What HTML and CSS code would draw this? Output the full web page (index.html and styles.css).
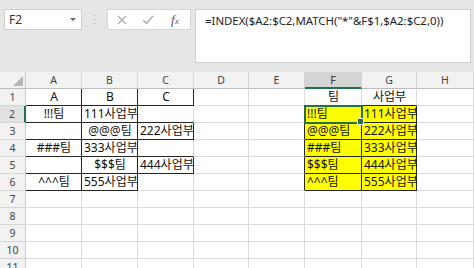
FILE: index.html
```html
<!DOCTYPE html>
<html lang="ko">
<head>
<meta charset="utf-8">
<link rel="stylesheet" href="styles.css">
</head>
<body>
<div class="app">
  <div class="fbar">
    <div class="namebox"><span class="nbtext">F2</span><span class="dd"></span></div>
    <div class="grip">
      <svg width="3" height="12" viewBox="0 0 3 12"><rect x="1" y="1" width="1" height="1" fill="#a9a9a9"/><rect x="1" y="5" width="1" height="1" fill="#a9a9a9"/><rect x="1" y="9" width="1" height="1" fill="#a9a9a9"/></svg>
    </div>
    <div class="fxbox">
      <svg class="ic-x" width="10" height="10" viewBox="0 0 10 10"><path d="M1 1 L9 9 M9 1 L1 9" stroke="#ababab" stroke-width="1.2" fill="none"/></svg>
      <svg class="ic-ok" width="12" height="10" viewBox="0 0 12 10"><path d="M1 5 L4.5 8.5 L11 1" stroke="#ababab" stroke-width="1.3" fill="none"/></svg>
      <span class="fx">f<span class="fxs">x</span></span>
    </div>
    <div class="finput">=INDEX($A2:$C2,MATCH("*"&amp;F$1,$A2:$C2,0))</div>
  </div>

  <div class="sheet">
    <div class="corner"><svg width="10" height="10" viewBox="0 0 10 10"><polygon points="10,0 10,10 0,10" fill="#b5b5b5"/></svg></div>
    <div class="ch">A</div><div class="ch">B</div><div class="ch">C</div><div class="ch">D</div><div class="ch">E</div><div class="ch ch-on">F</div><div class="ch">G</div><div class="ch">H</div>

    <div class="rh">1</div>
    <div class="c ctr dr db">A</div><div class="c ctr dr db">B</div><div class="c ctr dr db">C</div><div class="c"></div><div class="c"></div><div class="c ctr db">팀</div><div class="c ctr db">사업부</div><div class="c"></div>

    <div class="rh rh-on">2</div>
    <div class="c ctr dr db">!!!팀</div><div class="c dr db">111사업부</div><div class="c db"></div><div class="c"></div><div class="c dr"></div><div class="c y dr db sel">!!!팀</div><div class="c y dr db">111사업부</div><div class="c"></div>

    <div class="rh">3</div>
    <div class="c dr db"></div><div class="c ctr dr db">@@@팀</div><div class="c dr db">222사업부</div><div class="c"></div><div class="c dr"></div><div class="c y dr db">@@@팀</div><div class="c y dr db">222사업부</div><div class="c"></div>

    <div class="rh">4</div>
    <div class="c ctr dr db">###팀</div><div class="c dr db">333사업부</div><div class="c db"></div><div class="c"></div><div class="c dr"></div><div class="c y dr db">###팀</div><div class="c y dr db">333사업부</div><div class="c"></div>

    <div class="rh">5</div>
    <div class="c dr db"></div><div class="c ctr dr db">$$$팀</div><div class="c dr db">444사업부</div><div class="c"></div><div class="c dr"></div><div class="c y dr db">$$$팀</div><div class="c y dr db">444사업부</div><div class="c"></div>

    <div class="rh">6</div>
    <div class="c ctr dr db">^^^팀</div><div class="c dr db">555사업부</div><div class="c"></div><div class="c"></div><div class="c dr"></div><div class="c y dr db">^^^팀</div><div class="c y dr db">555사업부</div><div class="c"></div>

    <div class="rh">7</div>
    <div class="c"></div><div class="c"></div><div class="c"></div><div class="c"></div><div class="c"></div><div class="c"></div><div class="c"></div><div class="c"></div>
    <div class="rh">8</div>
    <div class="c"></div><div class="c"></div><div class="c"></div><div class="c"></div><div class="c"></div><div class="c"></div><div class="c"></div><div class="c"></div>
    <div class="rh">9</div>
    <div class="c"></div><div class="c"></div><div class="c"></div><div class="c"></div><div class="c"></div><div class="c"></div><div class="c"></div><div class="c"></div>
    <div class="rh">10</div>
    <div class="c"></div><div class="c"></div><div class="c"></div><div class="c"></div><div class="c"></div><div class="c"></div><div class="c"></div><div class="c"></div>
    <div class="rh">11</div>
    <div class="c"></div><div class="c"></div><div class="c"></div><div class="c"></div><div class="c"></div><div class="c"></div><div class="c"></div><div class="c"></div>
  </div>
</div>
</body>
</html>
```

FILE: styles.css
```css
* { box-sizing: border-box; }
html, body { margin: 0; padding: 0; }
body {
  width: 474px;
  height: 268px;
  overflow: hidden;
  background: #ffffff;
  font-family: "Noto Sans", "Noto Sans CJK KR", sans-serif;
}
.app { width: 474px; }

/* formula bar */
.fbar {
  height: 72px;
  background: #e6e6e6;
  display: flex;
  align-items: flex-start;
  padding-top: 9px;
}
.namebox {
  margin-left: 4px;
  width: 78px;
  height: 21px;
  background: #fff;
  border: 1px solid #cfcfcf;
  display: flex;
  align-items: center;
  justify-content: space-between;
  padding: 0 5px 0 4px;
}
.nbtext { font-size: 12px; color: #333; }
.dd {
  width: 0; height: 0;
  border-left: 3px solid transparent;
  border-right: 3px solid transparent;
  border-top: 3px solid #666;
}
.grip {
  width: 25px;
  height: 21px;
  display: flex;
  align-items: center;
  justify-content: center;
}
.fxbox {
  width: 84px;
  height: 21px;
  background: #fff;
  border: 1px solid #d6d6d6;
  display: flex;
  align-items: center;
  padding-left: 9px;
}
.ic-x { margin-right: 15px; }
.ic-ok { margin-right: 17px; }
.fx {
  font-family: "Liberation Serif", serif;
  font-style: italic;
  font-size: 13px;
  color: #555;
  line-height: 1;
}
.fxs { font-size: 9px; }
.finput {
  margin-left: 4px;
  width: 276px;
  height: 54px;
  background: #fff;
  border: 1px solid #cfcfcf;
  padding: 2px 0 0 9px;
  font-size: 11.4px;
  color: #222;
  white-space: nowrap;
  line-height: 17px;
}

/* sheet grid */
.sheet {
  display: grid;
  grid-template-columns: 26px 56px 56px 56px 55px 56px 57px 55px 1fr;
  grid-auto-rows: 17px;
}
.corner {
  background: #f2f2f2;
  border-right: 1px solid #c9c9c9;
  border-bottom: 1px solid #bdbdbd;
  display: flex;
  align-items: flex-end;
  justify-content: flex-end;
  padding: 0 2px 2px 0;
}
.ch {
  background: #f2f2f2;
  border-right: 1px solid #d5d5d5;
  border-bottom: 1px solid #bdbdbd;
  font-size: 10.5px;
  color: #444;
  display: flex;
  align-items: center;
  justify-content: center;
}
.ch-on {
  background: #d4d4d4;
  border-bottom: 2px solid #217346;
  color: #333;
}
.rh {
  background: #f2f2f2;
  border-right: 1px solid #c9c9c9;
  border-bottom: 1px solid #d5d5d5;
  font-size: 10.5px;
  color: #444;
  display: flex;
  align-items: center;
  justify-content: center;
}
.rh-on {
  background: #e1e1e1;
  border-right: 2px solid #217346;
}
.c {
  border-right: 1px solid #dcdcdc;
  border-bottom: 1px solid #dcdcdc;
  font-family: "Noto Sans", "Noto Sans CJK KR", sans-serif;
  font-size: 12px;
  line-height: 16px;
  color: #111;
  display: flex;
  align-items: flex-end;
  padding: 0 1px 0 2px;
  white-space: nowrap;
}
.ctr { justify-content: center; }
.dr { border-right-color: #262626; }
.db { border-bottom-color: #262626; }
.y { background: #ffff00; }
.sel {
  position: relative;
  outline: 2px solid #217346;
  outline-offset: -1px;
  z-index: 1;
}
.sel::after {
  content: "";
  position: absolute;
  right: -3px;
  bottom: -3px;
  width: 5px;
  height: 5px;
  background: #217346;
  border: 1px solid #fff;
}
```
